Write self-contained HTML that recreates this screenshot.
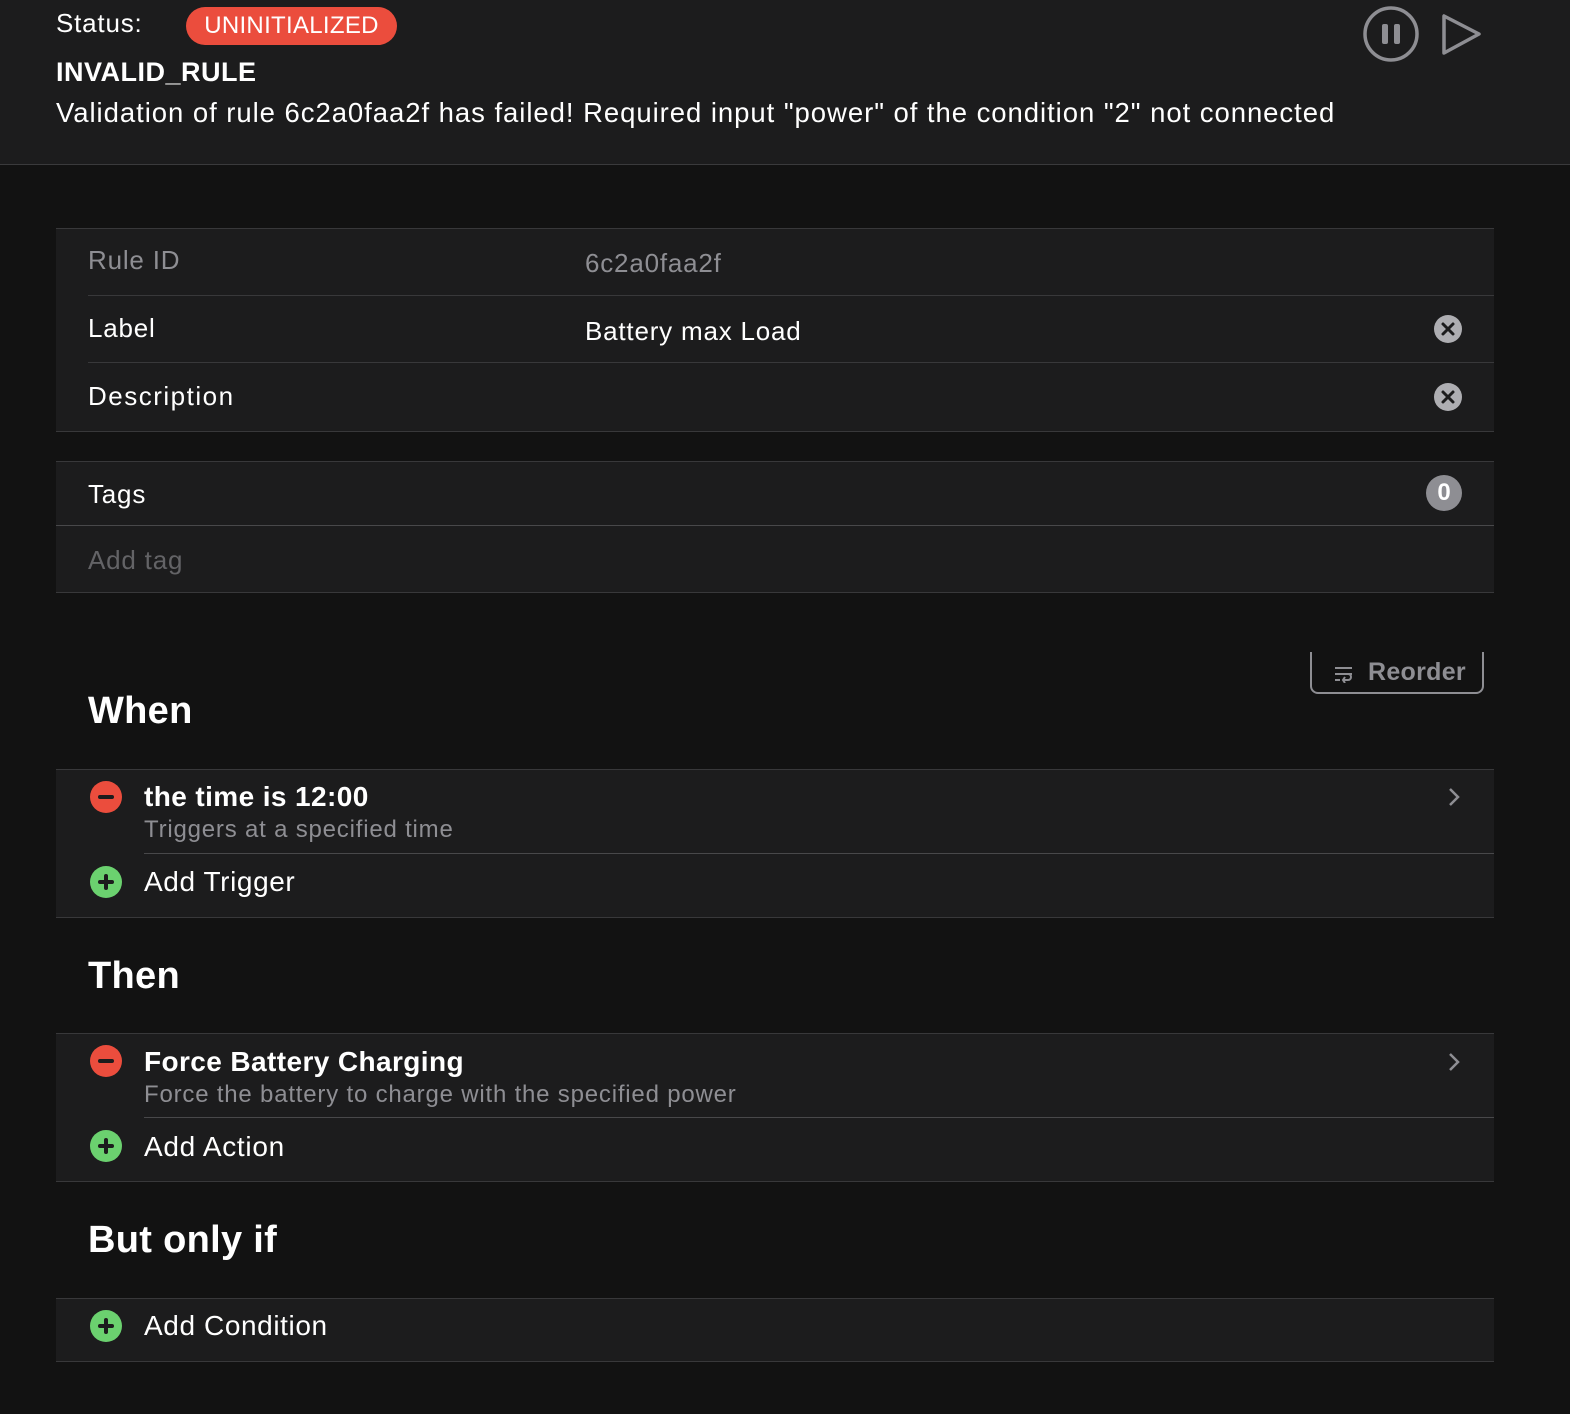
<!DOCTYPE html>
<html><head><style>
*{margin:0;padding:0;box-sizing:border-box}
body{width:1570px;height:1414px;background:#121212;font-family:"Liberation Sans",sans-serif;color:#fff;position:relative;overflow:hidden}
.a{position:absolute;white-space:nowrap}
.hdr{position:absolute;left:0;top:0;width:1570px;height:165px;background:#1c1c1d;border-bottom:1px solid #3a3a3c}
.cell{position:absolute;left:56px;width:1438px;background:#1c1c1d}
.bt{border-top:1px solid #38383a}.bb{border-bottom:1px solid #38383a}
.sep{position:absolute;height:1px;background:#38383a}
.t26{font-size:26px;line-height:30px;letter-spacing:0.8px}
.grey{color:#8e8e93}
.h{font-size:38px;font-weight:bold;letter-spacing:0.3px}
.ic{position:absolute;left:90px;width:32px;height:32px;border-radius:50%}
</style></head><body>
<div class="hdr"></div>
<div class="a t26" style="left:56px;top:8px">Status:</div>
<div class="a" style="left:186px;top:7px;width:211px;height:38px;border-radius:19px;background:#eb4d3d;font-size:24px;line-height:38px;text-align:center;letter-spacing:0.3px">UNINITIALIZED</div>
<div class="a" style="left:56px;top:56px;font-size:27px;font-weight:bold;line-height:32px;letter-spacing:0.5px">INVALID_RULE</div>
<div class="a" style="left:56px;top:97px;font-size:27.5px;line-height:32px;letter-spacing:0.95px">Validation of rule 6c2a0faa2f has failed! Required input "power" of the condition "2" not connected</div>
<svg class="a" style="left:1362px;top:6px" width="130" height="60" viewBox="0 0 130 60">
<circle cx="29" cy="28" r="26" fill="none" stroke="#8e8e93" stroke-width="3.5"/>
<rect x="20" y="18" width="6" height="20" rx="2" fill="#8e8e93"/><rect x="32" y="18" width="6" height="20" rx="2" fill="#8e8e93"/>
<path d="M82 10 L82 47 L117 28 Z" fill="none" stroke="#8e8e93" stroke-width="3.5" stroke-linejoin="round"/>
</svg>

<div class="cell bt bb" style="top:228px;height:204px"></div>
<div class="sep" style="left:88px;top:295px;width:1406px"></div>
<div class="sep" style="left:88px;top:362px;width:1406px"></div>
<div class="a t26 grey" style="left:88px;top:245px">Rule ID</div>
<div class="a t26 grey" style="left:585px;top:248px">6c2a0faa2f</div>
<div class="a t26" style="left:88px;top:313px">Label</div>
<div class="a t26" style="left:585px;top:316px">Battery max Load</div>
<div class="a t26" style="left:88px;top:381px;letter-spacing:1.5px">Description</div>
<svg class="a" style="left:1434px;top:315px" width="28" height="96" viewBox="0 0 28 96">
<circle cx="14" cy="14" r="14" fill="#aeaeb2"/><path d="M9 9L19 19M19 9L9 19" stroke="#1c1c1d" stroke-width="3" stroke-linecap="round"/>
<circle cx="14" cy="82" r="14" fill="#aeaeb2"/><path d="M9 77L19 87M19 77L9 87" stroke="#1c1c1d" stroke-width="3" stroke-linecap="round"/>
</svg>

<div class="cell bt bb" style="top:461px;height:132px"></div>
<div class="sep" style="left:56px;top:525px;width:1438px;background:#48484a"></div>
<div class="a t26" style="left:88px;top:479px">Tags</div>
<div class="a" style="left:1426px;top:475px;width:36px;height:36px;border-radius:50%;background:#8e8e93;font-size:24px;font-weight:bold;line-height:36px;text-align:center">0</div>
<div class="a t26" style="left:88px;top:545px;color:#636366">Add tag</div>

<div class="a" style="left:1310px;top:652px;width:174px;height:42px;border:2px solid #8e8e93;border-top:none;border-radius:0 0 8px 8px"></div>
<svg class="a" style="left:1334px;top:665px" width="20" height="18" viewBox="0 0 20 18"><path d="M1 3H18M1 9H18M1 15H6M14 9c4 0 4 6 0 6H9M11 12l-2 3 2 3" fill="none" stroke="#8e8e93" stroke-width="2"/></svg>
<div class="a" style="left:1368px;top:657px;font-size:25px;font-weight:bold;color:#8e8e93;line-height:30px;letter-spacing:0.3px">Reorder</div>

<div class="a h" style="left:88px;top:690px">When</div>
<div class="cell bt bb" style="top:769px;height:149px"></div>
<div class="sep" style="left:144px;top:853px;width:1350px;background:#48484a"></div>
<div class="ic" style="top:781px;background:#eb4d3d"><div style="position:absolute;left:8px;top:14px;width:16px;height:4px;background:#1c1c1d;border-radius:2px"></div></div>
<div class="a" style="left:144px;top:781px;font-size:28px;font-weight:bold;line-height:32px;letter-spacing:0.4px">the time is 12:00</div>
<div class="a" style="left:144px;top:816px;font-size:24px;line-height:28px;color:#8e8e93;letter-spacing:0.8px">Triggers at a specified time</div>
<div class="ic" style="top:866px;background:#6bd16f"><div style="position:absolute;left:8px;top:14px;width:16px;height:4px;background:#1c1c1d;border-radius:2px"></div><div style="position:absolute;left:14px;top:8px;width:4px;height:16px;background:#1c1c1d;border-radius:2px"></div></div>
<div class="a" style="left:144px;top:866px;font-size:28px;line-height:32px;letter-spacing:0.6px">Add Trigger</div>
<svg class="a" style="left:1446px;top:786px" width="16" height="22" viewBox="0 0 16 22"><path d="M4 3L12 11L4 19" fill="none" stroke="#8e8e93" stroke-width="2.5"/></svg>

<div class="a h" style="left:88px;top:955px">Then</div>
<div class="cell bt bb" style="top:1033px;height:149px"></div>
<div class="sep" style="left:144px;top:1117px;width:1350px;background:#48484a"></div>
<div class="ic" style="top:1045px;background:#eb4d3d"><div style="position:absolute;left:8px;top:14px;width:16px;height:4px;background:#1c1c1d;border-radius:2px"></div></div>
<div class="a" style="left:144px;top:1046px;font-size:28px;font-weight:bold;line-height:32px;letter-spacing:0.4px">Force Battery Charging</div>
<div class="a" style="left:144px;top:1081px;font-size:24px;line-height:28px;color:#8e8e93;letter-spacing:0.8px">Force the battery to charge with the specified power</div>
<div class="ic" style="top:1130px;background:#6bd16f"><div style="position:absolute;left:8px;top:14px;width:16px;height:4px;background:#1c1c1d;border-radius:2px"></div><div style="position:absolute;left:14px;top:8px;width:4px;height:16px;background:#1c1c1d;border-radius:2px"></div></div>
<div class="a" style="left:144px;top:1131px;font-size:28px;line-height:32px;letter-spacing:0.7px">Add Action</div>
<svg class="a" style="left:1446px;top:1051px" width="16" height="22" viewBox="0 0 16 22"><path d="M4 3L12 11L4 19" fill="none" stroke="#8e8e93" stroke-width="2.5"/></svg>

<div class="a h" style="left:88px;top:1219px">But only if</div>
<div class="cell bt bb" style="top:1298px;height:64px"></div>
<div class="ic" style="top:1310px;background:#6bd16f"><div style="position:absolute;left:8px;top:14px;width:16px;height:4px;background:#1c1c1d;border-radius:2px"></div><div style="position:absolute;left:14px;top:8px;width:4px;height:16px;background:#1c1c1d;border-radius:2px"></div></div>
<div class="a" style="left:144px;top:1310px;font-size:28px;line-height:32px;letter-spacing:0.6px">Add Condition</div>
</body></html>
